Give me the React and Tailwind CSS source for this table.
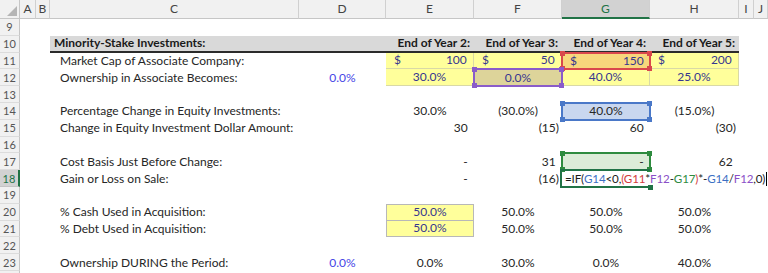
import React from 'react';

const GRID = 'grid grid-cols-[20px_16px_14px_249px_87px_88px_88px_88px_89px_15px_14px]';
const INK = 'text-[#262626]';
const BLUE = 'text-[#4646e6]';
const INPUT = 'text-[#36368f]';

// small square handles shown at the corners of a reference box
const Handles = ({ color }) => (
    <>
        <span className={`absolute -left-[3px] -top-[3px] w-[5px] h-[5px] ${color}`}></span>
        <span className={`absolute -right-[3px] -top-[3px] w-[5px] h-[5px] ${color}`}></span>
        <span className={`absolute -left-[3px] -bottom-[3px] w-[5px] h-[5px] ${color}`}></span>
        <span className={`absolute -right-[3px] -bottom-[3px] w-[5px] h-[5px] ${color}`}></span>
    </>
);

const RefBox = ({ border, handle }) => (
    <div className={`absolute -inset-[1px] border-2 ${border} pointer-events-none z-10`}>
        <Handles color={handle} />
    </div>
);

// value helpers
const Ctr = ({ children, color = INK }) => (
    <div className={`h-full flex items-center justify-center ${color}`}>{children}</div>
);

// accounting style: positives keep room for a closing paren
const Num = ({ children, neg = false, color = INK }) => (
    <div className={`h-full flex items-center justify-end pr-[3px] ${color}`}>
        {children}
        {!neg && <span className="invisible">)</span>}
    </div>
);

const Dollar = ({ value }) => (
    <div className={`h-full flex items-center justify-between pl-[8px] pr-[3px] ${INPUT}`}>
        <span>$</span>
        <span>{value}<span className="invisible">)</span></span>
    </div>
);

const RowHead = ({ n, active }) => (
    <div
        className={`flex items-center justify-center text-[11px] border-b ${
            active
                ? 'bg-[#d2d2d2] text-[#217346] border-r-2 border-r-[#217346] border-b-[#c4c4c4]'
                : 'bg-[#f1f1f1] text-[#555] border-r border-r-[#c6c6c6] border-b-[#dcdcdc]'
        }`}
    >
        {n}
    </div>
);

const BAND = 'bg-[#d9d9d9] border-b-2 border-b-[#2b2b2b]';

const Row = ({ n, active, label, band, d, e, f, g, h, ec = '', fc = '', gc = '', hc = '', dc = '' }) => (
    <div className={`${GRID} h-[16.8px]`}>
        <RowHead n={n} active={active} />
        <div></div>
        <div></div>
        <div className={`flex items-center whitespace-nowrap ${band ? `${BAND} pl-[4px] font-bold text-[#1a1a1a]` : `pl-[10px] ${INK}`}`}>
            {label}
        </div>
        <div className={`relative ${band ? BAND : ''} ${dc}`}>{d}</div>
        <div className={`relative ${band ? BAND : ''} ${ec}`}>{e}</div>
        <div className={`relative ${band ? BAND : ''} ${fc}`}>{f}</div>
        <div className={`relative ${band ? BAND : ''} ${gc}`}>{g}</div>
        <div className={`relative ${band ? BAND : ''} ${hc}`}>{h}</div>
        <div></div>
        <div></div>
    </div>
);

const Head = ({ children }) => (
    <div className="h-full flex items-center justify-end pr-[4px] font-bold text-[#1a1a1a] whitespace-nowrap">{children}</div>
);

const ColHead = ({ children, active }) => (
    <div
        className={`flex items-center justify-center text-[12px] border-r border-r-[#d0d0d0] ${
            active ? 'bg-[#d2d2d2] text-[#217346] border-b-2 border-b-[#217346]' : 'bg-[#f1f1f1] text-[#444] border-b border-b-[#c6c6c6]'
        }`}
    >
        {children}
    </div>
);

const YELLOW = 'bg-[#ffff9b] border-b border-r border-[#d9d9a6]';

const Formula = () => (
    <div className="absolute left-[3px] top-0 h-full flex items-center whitespace-nowrap z-20 text-[#1a1a1a] text-[11.6px] tracking-[-0.15px]">
        <span>=IF(</span>
        <span className="text-[#3b6fc4]">G14</span>
        <span>&lt;0,</span>
        <span className="text-[#d23c3c]">(G11</span>
        <span>*</span>
        <span className="text-[#8a4fc7]">F12</span>
        <span>-</span>
        <span className="text-[#2e8b3f]">G17</span>
        <span className="text-[#d23c3c]">)</span>
        <span>*-</span>
        <span className="text-[#3b6fc4]">G14</span>
        <span>/</span>
        <span className="text-[#8a4fc7]">F12</span>
        <span>,0)</span>
        <span className="ml-[1px] w-[1px] h-[14px] bg-black"></span>
    </div>
);

export default function App() {
    return (
        <div className="w-[768px] h-[273px] overflow-hidden bg-white font-['Lato',sans-serif] text-[12px] leading-none">
            {/* column headers */}
            <div className={`${GRID} h-[19px]`}>
                <div className="bg-[#f1f1f1] border-r border-b border-[#c6c6c6] flex items-end justify-end p-[2px]">
                    <svg width="10" height="10" viewBox="0 0 10 10">
                        <polygon points="10,0 10,10 0,10" fill="#b5b5b5" />
                    </svg>
                </div>
                <ColHead>A</ColHead>
                <ColHead>B</ColHead>
                <ColHead>C</ColHead>
                <ColHead>D</ColHead>
                <ColHead>E</ColHead>
                <ColHead>F</ColHead>
                <ColHead active>G</ColHead>
                <ColHead>H</ColHead>
                <ColHead>I</ColHead>
                <ColHead>J</ColHead>
            </div>

            <Row n={9} />
            <Row
                n={10}
                band
                label="Minority-Stake Investments:"
                e={<Head>End of Year 2:</Head>}
                f={<Head>End of Year 3:</Head>}
                g={<Head>End of Year 4:</Head>}
                h={<Head>End of Year 5:</Head>}
            />
            <Row
                n={11}
                label="Market Cap of Associate Company:"
                ec={YELLOW}
                fc={YELLOW}
                gc="bg-[#f7d77c]"
                hc={YELLOW}
                e={<Dollar value="100" />}
                f={<Dollar value="50" />}
                g={<><Dollar value="150" /><RefBox border="border-[#d9474c]" handle="bg-[#d9474c]" /></>}
                h={<Dollar value="200" />}
            />
            <Row
                n={12}
                label="Ownership in Associate Becomes:"
                d={<Ctr color={BLUE}>0.0%</Ctr>}
                ec={YELLOW}
                fc="bg-[#ddd49a]"
                gc={YELLOW}
                hc={YELLOW}
                e={<Ctr color={INPUT}>30.0%</Ctr>}
                f={<><Ctr color={INPUT}>0.0%</Ctr><RefBox border="border-[#8a5cc9]" handle="bg-[#8a5cc9]" /></>}
                g={<Ctr color={INPUT}>40.0%</Ctr>}
                h={<Ctr color={INPUT}>25.0%</Ctr>}
            />
            <Row n={13} />
            <Row
                n={14}
                label="Percentage Change in Equity Investments:"
                gc="bg-[#c9d7ef]"
                e={<Ctr>30.0%</Ctr>}
                f={<Ctr>(30.0%)</Ctr>}
                g={<><Ctr>40.0%</Ctr><RefBox border="border-[#4a78c8]" handle="bg-[#4a78c8]" /></>}
                h={<Ctr>(15.0%)</Ctr>}
            />
            <Row
                n={15}
                label="Change in Equity Investment Dollar Amount:"
                e={<Num>30</Num>}
                f={<Num neg>(15)</Num>}
                g={<Num>60</Num>}
                h={<Num neg>(30)</Num>}
            />
            <Row n={16} />
            <Row
                n={17}
                label="Cost Basis Just Before Change:"
                gc="bg-[#dcecd8]"
                e={<Num>-</Num>}
                f={<Num>31</Num>}
                g={<><Num>-</Num><RefBox border="border-[#2e8b3f]" handle="bg-[#2e8b3f]" /></>}
                h={<Num>62</Num>}
            />
            <Row
                n={18}
                active
                label="Gain or Loss on Sale:"
                e={<Num>-</Num>}
                f={<Num neg>(16)</Num>}
                g={
                    <>
                        <div className="absolute -left-[2px] -top-[1px] -bottom-[1px] right-0 border-2 border-r-0 border-[#217346] z-10">
                            <span className="absolute -right-[3px] -bottom-[4px] w-[5px] h-[5px] bg-[#217346]"></span>
                        </div>
                        <Formula />
                    </>
                }
            />
            <Row n={19} />
            <Row
                n={20}
                label="% Cash Used in Acquisition:"
                ec="bg-[#ffff9b] border border-[#b8b8b8]"
                e={<Ctr color={INPUT}>50.0%</Ctr>}
                f={<Ctr>50.0%</Ctr>}
                g={<Ctr>50.0%</Ctr>}
                h={<Ctr>50.0%</Ctr>}
            />
            <Row
                n={21}
                label="% Debt Used in Acquisition:"
                ec="bg-[#ffff9b] border border-t-0 border-[#b8b8b8]"
                e={<Ctr color={INPUT}>50.0%</Ctr>}
                f={<Ctr>50.0%</Ctr>}
                g={<Ctr>50.0%</Ctr>}
                h={<Ctr>50.0%</Ctr>}
            />
            <Row n={22} />
            <Row
                n={23}
                label="Ownership DURING the Period:"
                d={<Ctr color={BLUE}>0.0%</Ctr>}
                e={<Ctr>0.0%</Ctr>}
                f={<Ctr>30.0%</Ctr>}
                g={<Ctr>0.0%</Ctr>}
                h={<Ctr>40.0%</Ctr>}
            />
            <Row n="" />
        </div>
    );
}
